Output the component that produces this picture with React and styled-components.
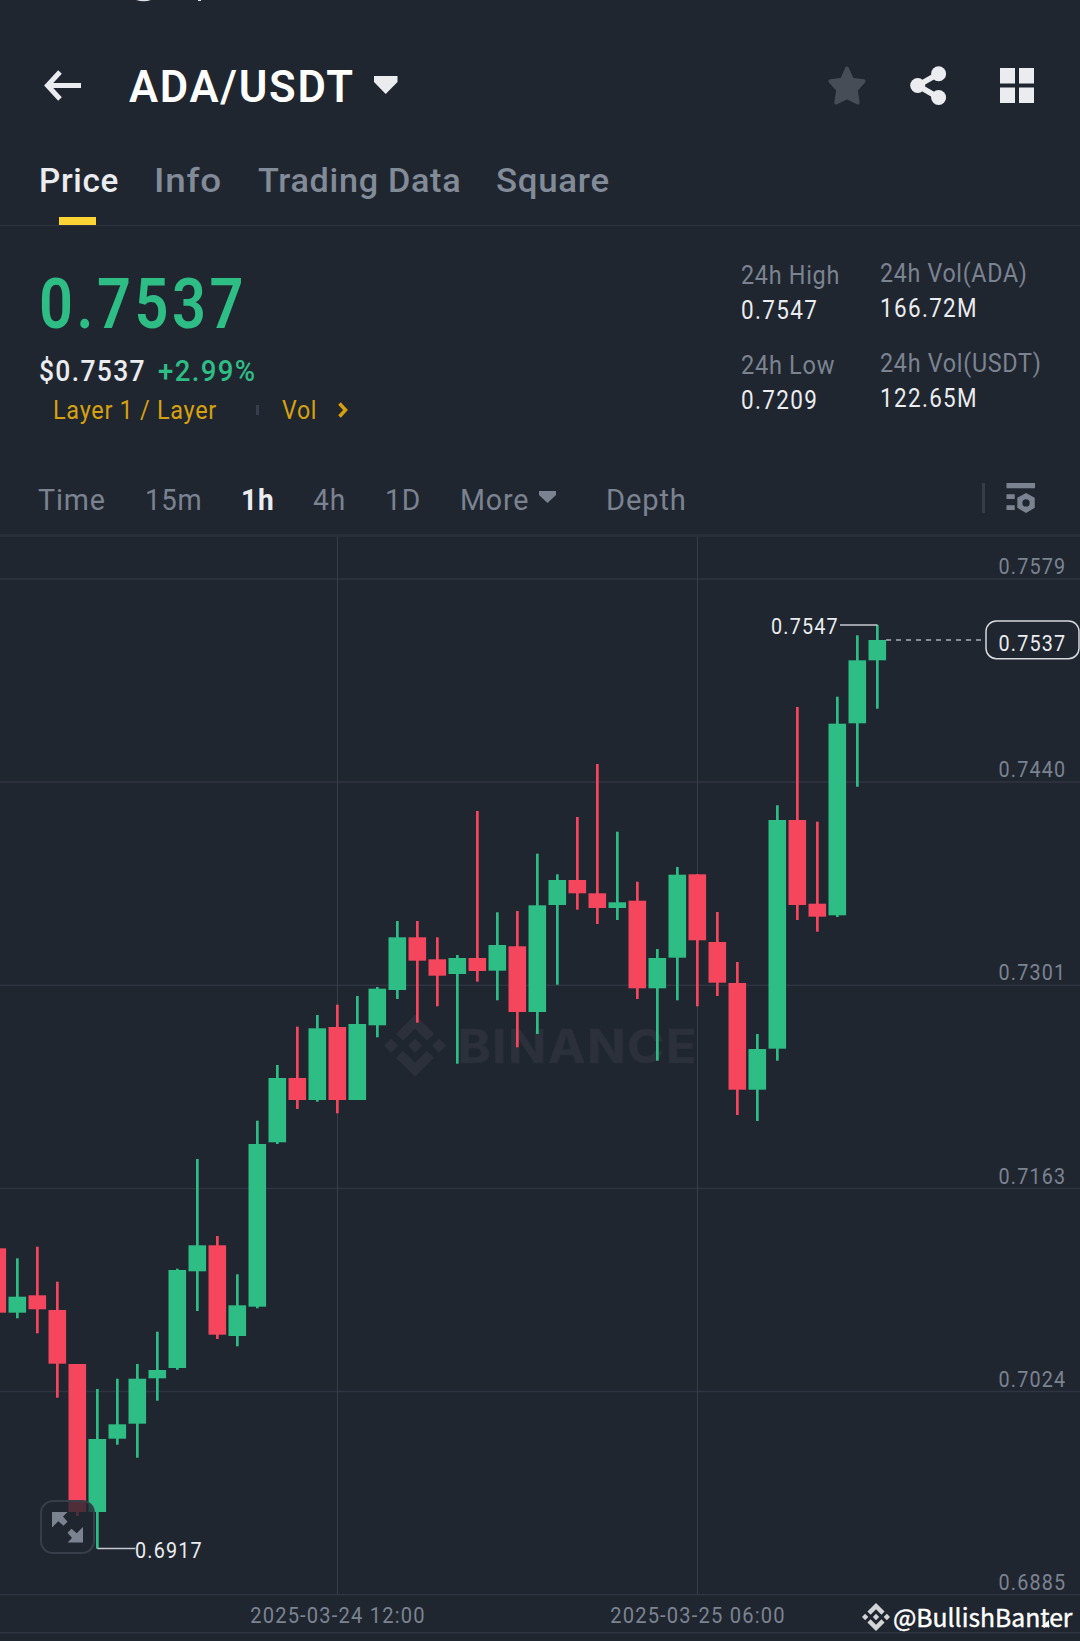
/* eslint-disable react/prop-types */
import React, { useLayoutEffect, useRef, useState } from "react";
import styled, { createGlobalStyle } from "styled-components";

const GlobalStyle = createGlobalStyle`
  * {
    box-sizing: border-box;
  }

  body {
    margin: 0;
    background: #202630;
    font-family: Roboto, "Liberation Sans", sans-serif;
    color: #eaecef;
  }
`;

const Screen = styled.div`
  position: relative;
  width: 1080px;
  height: 1641px;
  overflow: hidden;
  display: flex;
  flex-direction: column;
`;

const StatusBar = styled.svg`
  position: absolute;
  top: 0;
  left: 0;
`;

const FitBox = styled.span`
  display: inline-block;
  flex: none;
  width: ${(p) => p.$width}px;
  white-space: nowrap;

  span {
    display: inline-block;
    transform-origin: left center;
  }
`;

const TopBar = styled.header`
  display: flex;
  align-items: center;
  height: 134px;
  padding: 37px 46px 0 44px;

  svg {
    flex: none;
  }

  .back {
    margin-right: 47px;
  }

  .caret {
    margin: 0 auto 1px 20px;
  }

  .star {
    margin-right: 44px;
  }

  .share {
    margin-right: 53px;
  }
`;

const Pair = styled.h1`
  margin: 0;
  padding-top: 3px;
  font-size: 44.5px;
  line-height: 60px;
  font-weight: 600;
  letter-spacing: 0.04em;
  color: #fff;
`;

const Tabs = styled.nav`
  display: flex;
  gap: 36px;
  height: 92px;
  padding-left: 38.5px;
  border-bottom: 1px solid #2e343f;
`;

const Tab = styled.div`
  position: relative;
  padding-top: 1px;
  font-size: 34px;
  line-height: 90px;
  font-weight: 500;
  letter-spacing: 0.02em;
  color: ${(p) => (p.$active ? "#eaecef" : "#828b98")};

  &::after {
    content: "";
    display: ${(p) => (p.$active ? "block" : "none")};
    position: absolute;
    left: 20.5px;
    bottom: 0;
    width: 37px;
    height: 8px;
    background: #fcd535;
  }
`;

const Summary = styled.section`
  display: flex;
  justify-content: space-between;
  height: 237px;
`;

const PriceColumn = styled.div`
  padding: 42px 0 0 38.5px;
`;

const LastPrice = styled.div`
  height: 72px;
  font-size: 70px;
  line-height: 72px;
  font-weight: 600;
  letter-spacing: 0.06em;
  color: #2ebd85;
`;

const FiatRow = styled.div`
  display: flex;
  gap: 14px;
  margin-top: 16px;
  font-size: 29px;
  line-height: 30px;
  font-weight: 500;
  letter-spacing: 0.05em;

  .change {
    color: #2ebd85;
  }
`;

const TagRow = styled.div`
  display: flex;
  align-items: center;
  height: 30px;
  margin: 10px 0 0 14px;
  font-size: 25px;
  line-height: 30px;
  letter-spacing: 0.03em;
  color: #d5a10f;

  .chevron {
    margin: 0 0 2px 21px;
  }
`;

const TagDivider = styled.i`
  width: 3px;
  height: 10px;
  margin: 0 23px 2px 40px;
  background: #383e49;
`;

const Stats = styled.div`
  display: flex;
  width: 339.5px;
  padding-top: 32px;
`;

const StatColumn = styled.div`
  display: flex;
  flex-direction: column;
  gap: 20px;
  width: 139px;
  margin-top: ${(p) => p.$offset || 0}px;
`;

const Stat = styled.div`
  display: flex;
  flex-direction: column;
  font-size: 25px;
  line-height: 35px;
  letter-spacing: 0.06em;

  .label {
    letter-spacing: 0.03em;
    color: #7b8391;
  }
`;

const Intervals = styled.div`
  display: flex;
  align-items: center;
  height: 74px;
  padding: 2px 44px 0 38px;
  border-bottom: 3px solid #292f39;
  gap: 39.5px;
`;

const Interval = styled.div`
  display: flex;
  align-items: center;
  font-size: 29.5px;
  line-height: 40px;
  font-weight: ${(p) => (p.$active ? 700 : 400)};
  letter-spacing: 0.03em;
  color: ${(p) => (p.$active ? "#eaecef" : "#7b8391")};

  svg {
    margin: 0 10px 5px;
  }
`;

const ChartTools = styled.div`
  display: flex;
  align-items: center;
  gap: 21px;
  margin: 0 0 3px auto;

  i {
    width: 3px;
    height: 30px;
    background: #383e49;
  }
`;

const ChartArea = styled.section`
  position: relative;
  flex: 1;

  > svg {
    display: block;
  }
`;

const ExpandButton = styled.button`
  position: absolute;
  left: 40px;
  top: 963px;
  width: 55px;
  height: 54px;
  padding: 0;
  border: 2px solid #383e49;
  border-radius: 13px;
  background: rgba(32, 38, 48, 0.78);

  svg {
    display: block;
  }
`;

const Credit = styled.div`
  position: absolute;
  left: 862px;
  bottom: 8px;
  display: flex;
  align-items: center;
  gap: 3px;
  height: 32px;
  font-family: "Noto Sans CJK SC", sans-serif;
  font-size: 24.5px;
  line-height: 32px;
  -webkit-text-stroke: 0.4px #fff;
  color: #fff;

  .cursor {
    position: absolute;
    left: 179px;
    bottom: 5px;
  }
`;

// squeezes or stretches a line of text to a given width
const FitText = ({ width, className, children }) => {
  const ref = useRef(null);
  const [scale, setScale] = useState(1);

  useLayoutEffect(() => {
    const el = ref.current;
    const spacing = parseFloat(getComputedStyle(el).letterSpacing) || 0;
    setScale(width / (el.offsetWidth - spacing));
  }, [width, children]);

  return (
    <FitBox $width={width} className={className}>
      <span ref={ref} style={{ transform: `scaleX(${scale})` }}>
        {children}
      </span>
    </FitBox>
  );
};

const BinanceMark = ({ size, color, x, y }) => (
  <svg x={x} y={y} width={size} height={size} viewBox="0 0 62 62" fill={color}>
    <path d="M31 0 50 19 43 26 31 14 19 26 12 19Z" />
    <path d="M31 62 50 43 43 36 31 48 19 36 12 43Z" />
    <path d="M31 24 38 31 31 38 24 31Z" />
    <path d="M7 24 14 31 7 38 0 31Z" />
    <path d="M55 24 62 31 55 38 48 31Z" />
  </svg>
);

const tabs = [
  { label: "Price", width: 79.5 },
  { label: "Info", width: 67.5 },
  { label: "Trading Data", width: 202.5 },
  { label: "Square", width: 113 },
];

const stats = [
  [
    { label: "24h High", lw: 98.5, value: "0.7547", vw: 76 },
    { label: "24h Low", lw: 93.5, value: "0.7209", vw: 76 },
  ],
  [
    { label: "24h Vol(ADA)", lw: 147, value: "166.72M", vw: 96.5 },
    { label: "24h Vol(USDT)", lw: 161, value: "122.65M", vw: 96.5 },
  ],
];

const intervals = [
  { label: "Time", width: 67 },
  { label: "15m", width: 57 },
  { label: "1h", width: 32.5 },
  { label: "4h", width: 32.5 },
  { label: "1D", width: 35.5 },
];

// [rising, high, body top, body bottom, low]
const candles = [
  [0, 1248.3, 1248.3, 1312.7, 1312.7],
  [1, 1258.3, 1296.7, 1312.7, 1318.3],
  [0, 1246.7, 1295.3, 1309.3, 1333.3],
  [0, 1281.7, 1310, 1363.7, 1397.7],
  [0, 1364, 1364, 1512, 1516],
  [1, 1389, 1439, 1512, 1548.7],
  [1, 1378.7, 1424.3, 1438.7, 1444.7],
  [1, 1364, 1378.7, 1423.7, 1457.7],
  [1, 1331.7, 1370, 1378.3, 1400.7],
  [1, 1268.7, 1270, 1368, 1369.7],
  [1, 1159, 1245.3, 1271.3, 1311],
  [0, 1236, 1245.3, 1334.7, 1339],
  [1, 1274.3, 1305.3, 1336, 1346.3],
  [1, 1120.7, 1144, 1306.7, 1308.3],
  [1, 1065, 1078, 1142.3, 1144],
  [0, 1026.7, 1078, 1100, 1109],
  [1, 1015, 1028.3, 1100, 1101.7],
  [0, 1004.7, 1027, 1100, 1113.3],
  [1, 996, 1024, 1100, 1100],
  [1, 987, 988.7, 1025.3, 1037.3],
  [1, 921, 937.3, 990, 999],
  [0, 921, 937.3, 960.7, 1022.7],
  [0, 937.3, 959.3, 975.7, 1006.3],
  [1, 955, 958, 974, 1063.7],
  [0, 811, 958, 971, 981.7],
  [1, 912.3, 945, 970.7, 1000.3],
  [0, 911, 946.3, 1012, 1047.3],
  [1, 853.7, 905.3, 1012, 1034],
  [1, 874.3, 880, 905, 984.7],
  [0, 817, 880, 893.3, 909.7],
  [0, 764, 893.3, 908, 924],
  [1, 831.7, 902.3, 908, 920],
  [0, 881.7, 900.7, 988.3, 999],
  [1, 949, 958, 988.3, 1060.7],
  [1, 867, 874.7, 957.7, 1000.3],
  [0, 874.3, 874.3, 940.3, 1006.3],
  [0, 912, 942, 982.7, 996],
  [0, 962, 983, 1089.7, 1115],
  [1, 1034, 1049, 1089.7, 1121],
  [1, 805.3, 820, 1048.7, 1060.7],
  [0, 707, 820, 905, 920],
  [0, 821.7, 903.7, 916.7, 931.7],
  [1, 696.7, 723.7, 915.3, 917],
  [1, 635.3, 660.3, 723.3, 786.7],
  [1, 625, 640, 660.3, 708.7],
];

const axis = [
  { y: 579, label: "0.7579" },
  { y: 782, label: "0.7440" },
  { y: 985.3, label: "0.7301" },
  { y: 1188.5, label: "0.7163" },
  { y: 1391.5, label: "0.7024" },
  { y: 1594.5, label: "0.6885" },
];

const dates = [
  { x: 337.5, label: "2025-03-24 12:00" },
  { x: 697.5, label: "2025-03-25 06:00" },
];

const ChartText = ({ x, y, width, color, children }) => (
  <text
    x={x}
    y={y}
    fill={color}
    fontSize="22.8"
    letterSpacing="1.35"
    textLength={width}
    lengthAdjust="spacingAndGlyphs"
  >
    {children}
  </text>
);

const CandleChart = () => (
  <svg width="1080" height="1104" viewBox="0 537 1080 1104">
    <g fill="#2f3540">
      {axis.map((a) => (
        <rect key={a.label} x="0" y={a.y - 0.75} width="1080" height="1.5" />
      ))}
      <rect x="0" y="1632" width="1080" height="1.5" />
      {dates.map((d) => (
        <rect key={d.label} x={d.x - 0.5} y="537" width="1" height="1057" fill="#383e49" />
      ))}
    </g>

    <BinanceMark x={384} y={1014.7} size={62} color="#2b303b" />
    <text
      x="457.5"
      y="1062.7"
      fill="#2b303b"
      stroke="#2b303b"
      strokeWidth="0.6"
      fontFamily="Inter, sans-serif"
      fontWeight="700"
      fontSize="47"
      letterSpacing="1.5"
      textLength="240.5"
      lengthAdjust="spacingAndGlyphs"
    >
      BINANCE
    </text>

    {candles.map(([up, high, top, bottom, low], i) => {
      const x = 20 * i - 2.7;
      return (
        <g key={i} fill={up ? "#2ebd85" : "#f6465d"}>
          <rect x={x - 1.3} y={high} width="2.7" height={low - high} />
          <rect x={x - 8.8} y={top} width="17.6" height={bottom - top} />
        </g>
      );
    })}

    {axis.map((a) => (
      <ChartText key={a.label} x={998.5} y={a.y - 5} width={67.8} color="#7b8391">
        {a.label}
      </ChartText>
    ))}
    {dates.map((d) => (
      <ChartText key={d.label} x={d.x - 87.3} y={1622.7} width={175.5} color="#7b8391">
        {d.label}
      </ChartText>
    ))}

    <path d="M840 625h37.5M97.5 1548.5h38" stroke="#c4c8ce" strokeWidth="1.7" />
    <ChartText x={771} y={633.7} width={67.8} color="#eaecef">
      0.7547
    </ChartText>
    <ChartText x={135} y={1558} width={67.8} color="#eaecef">
      0.6917
    </ChartText>

    <path d="M886 640h97" stroke="#a9aeb6" strokeWidth="1.7" strokeDasharray="5 5" />
    <rect x="986" y="621" width="93" height="37.7" rx="10.5" fill="#202630" stroke="#d5d8dc" strokeWidth="1.5" />
    <ChartText x={998.5} y={651} width={67.8} color="#eaecef">
      0.7537
    </ChartText>
  </svg>
);

const App = () => {
  return (
    <>
      <GlobalStyle />
      <Screen>
        <StatusBar width="220" height="3" fill="#dfe1e4">
          <path d="M136 0h15q-7 2.500-15 0Z" />
          <path d="M198 0h3v1h-3Z" />
        </StatusBar>

        <TopBar>
          <svg className="back" width="38" height="31" fill="none" stroke="#eaecef" strokeWidth="5">
            <path d="M16 2 3.500 15.500 16 29M3 15.500h34" />
          </svg>
          <Pair>
            <FitText width={224.5}>ADA/USDT</FitText>
          </Pair>
          <svg className="caret" width="24" height="18" fill="#eaecef">
            <path d="M0 0h23.500v6L11.700 18 0 6Z" />
          </svg>
          <svg className="star" width="38" height="39" viewBox="0 0 38 40" fill="#474d57" stroke="#474d57" strokeWidth="4" strokeLinejoin="round">
            <path d="M19 2.500 24 14 36 15.500 28 24.500 30 37.500 19 32 8 37.500 10 24.500 2 15.500 14 14Z" />
          </svg>
          <svg className="share" width="37" height="40" fill="#eaecef">
            <path d="M28.300 7.800 7.700 19.500 28.300 31.500" fill="none" stroke="#eaecef" strokeWidth="5.500" />
            <circle cx="7.700" cy="19.500" r="7.500" />
            <circle cx="28.600" cy="7.800" r="7.500" />
            <circle cx="28.600" cy="31.500" r="7.500" />
          </svg>
          <svg width="34" height="35" fill="#eaecef">
            <path d="M0 0h15v15.500H0ZM19 0h15v15.500H19ZM0 19.500h15V35H0ZM19 19.500h15V35H19Z" />
          </svg>
        </TopBar>

        <Tabs>
          {tabs.map((tab, i) => (
            <Tab key={tab.label} $active={i === 0}>
              <FitText width={tab.width}>{tab.label}</FitText>
            </Tab>
          ))}
        </Tabs>

        <Summary>
          <PriceColumn>
            <LastPrice>
              <FitText width={204.5}>0.7537</FitText>
            </LastPrice>
            <FiatRow>
              <FitText width={105.5}>$0.7537</FitText>
              <FitText width={97.5} className="change">
                +2.99%
              </FitText>
            </FiatRow>
            <TagRow>
              <FitText width={163.5}>Layer 1 / Layer</FitText>
              <TagDivider />
              <FitText width={34.5}>Vol</FitText>
              <svg className="chevron" width="10" height="16" fill="none" stroke="#d5a10f" strokeWidth="3.500">
                <path d="M1.500 1.500 7.500 8 1.500 14.500" />
              </svg>
            </TagRow>
          </PriceColumn>
          <Stats>
            {stats.map((column, i) => (
              <StatColumn key={i} $offset={i * -2}>
                {column.map((stat) => (
                  <Stat key={stat.label}>
                    <FitText width={stat.lw} className="label">
                      {stat.label}
                    </FitText>
                    <FitText width={stat.vw}>{stat.value}</FitText>
                  </Stat>
                ))}
              </StatColumn>
            ))}
          </Stats>
        </Summary>

        <Intervals>
          {intervals.map((item) => (
            <Interval key={item.label} $active={item.label === "1h"}>
              <FitText width={item.width}>{item.label}</FitText>
            </Interval>
          ))}
          <Interval>
            <FitText width={69}>More</FitText>
            <svg width="17" height="12" fill="#7b8391">
              <path d="M0 0h17v4L8.500 12 0 4Z" />
            </svg>
          </Interval>
          <Interval>
            <FitText width={80}>Depth</FitText>
          </Interval>
          <ChartTools>
            <i />
            <svg width="30" height="30" viewBox="0 0 30 31" fill="#7b8391">
              <path d="M0 0h29.500v5.500H0ZM0 11.500h8.500v5H0ZM0 23h8.500v5H0Z" />
              <path
                fillRule="evenodd"
                d="M20.200 10.300 29.200 15.300V25.700L20.200 31 11.200 25.700V15.300ZM20.200 16.800a3.800 3.800 0 1 0 0 7.600a3.800 3.800 0 1 0 0-7.600Z"
              />
            </svg>
          </ChartTools>
        </Intervals>

        <ChartArea>
          <CandleChart />
          <ExpandButton aria-label="Expand chart">
            <svg width="51" height="50" fill="#7b8391">
              <path d="M10 10h15.500l-4.500 4.500 4.500 5.200-4 4-5.200-4.500-6.300 6.300Z" />
              <path d="M41 40.500H25.500l4.500-4.500-4.500-5.200 4-4 5.200 4.500 6.300-6.300Z" />
            </svg>
          </ExpandButton>
          <Credit>
            <BinanceMark size={28} color="#d2d4d6" />
            <FitText width={179.5}>@BullishBanter</FitText>
            <svg className="cursor" width="8" height="8" fill="#fff">
              <path d="M8 0v8L5.500 5.500 3.500 8 0 6 4 3.500Z" />
            </svg>
          </Credit>
        </ChartArea>
      </Screen>
    </>
  );
};

export default App;
